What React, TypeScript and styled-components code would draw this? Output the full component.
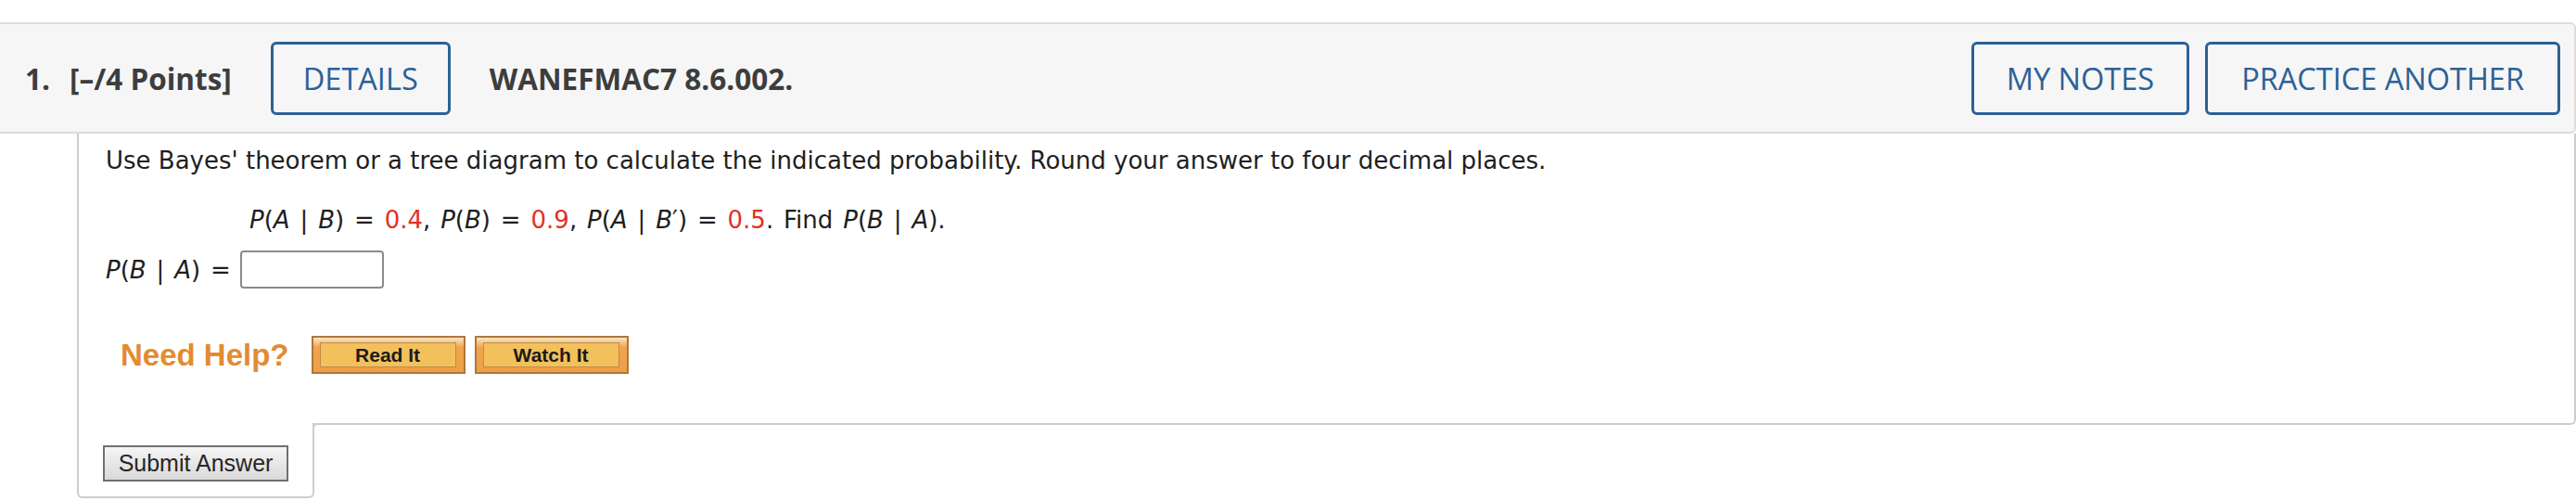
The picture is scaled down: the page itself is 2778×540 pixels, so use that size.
import React from "react";
import styled, { createGlobalStyle } from "styled-components";

const Global = createGlobalStyle`
  html, body { margin: 0; padding: 0; background: #ffffff; }
  body { font-family: "DejaVu Sans", Verdana, sans-serif; overflow: hidden; }
`;

const Page = styled.div`
  width: 2778px;
  padding-top: 24px;
  box-sizing: border-box;
`;

const Header = styled.div`
  display: flex;
  align-items: center;
  width: 2778px;
  height: 120px;
  box-sizing: border-box;
  background: #f6f6f6;
  border: 2px solid #dcdcdc;
  border-left: none;
  border-radius: 0 6px 6px 0;
  padding: 0 15px 0 27px;
  font-family: "Open Sans", sans-serif;
  color: #3d3d3d;
`;

const Num = styled.span`
  font-weight: 700;
  font-size: 31.5px;
  margin-right: 21px;
`;

const Points = styled.span`
  font-weight: 700;
  font-size: 31.5px;
  margin-right: 42px;
`;

const Code = styled.span`
  font-weight: 700;
  font-size: 31.5px;
  margin-left: 42px;
`;

const OutlineButton = styled.button<{ $pad?: number }>`
  height: 79px;
  padding: 0 ${(p) => p.$pad ?? 35}px;
  border: 3px solid #2b6197;
  border-radius: 6px;
  background: transparent;
  color: #2b6197;
  font-family: "Open Sans", sans-serif;
  font-size: 32.5px;
  font-weight: 400;
  cursor: pointer;
`;

const RightGroup = styled.div`
  margin-left: auto;
  display: flex;
  gap: 17px;
`;

const Panel = styled.div`
  margin-left: 83px;
  border-left: 2px solid #cdcdcd;
  border-right: 2px solid #cdcdcd;
  border-bottom: 2px solid #cdcdcd;
  border-bottom-right-radius: 6px;
  padding: 14px 0 53px 29px;
  color: #1e1e1e;
  font-family: "DejaVu Sans", Verdana, sans-serif;
  font-size: 26px;
  line-height: 30px;
`;

const Para = styled.div``;

const Equation = styled.div`
  margin: 34px 0 0 155px;
  word-spacing: 2.6px;
`;

const I = styled.i`
  font-style: italic;
`;

const Red = styled.span`
  color: #e3301f;
`;

const AnswerRow = styled.div`
  display: flex;
  align-items: center;
  margin-top: 18px;
  gap: 10px;
  word-spacing: 2.6px;
`;

const AnswerInput = styled.input`
  width: 155px;
  height: 41px;
  box-sizing: border-box;
  border: 2px solid #8a8a8a;
  border-radius: 4px;
  background: #fff;
`;

const HelpRow = styled.div`
  display: flex;
  align-items: center;
  margin: 51px 0 0 16px;
`;

const HelpLabel = styled.span`
  font-family: "Liberation Sans", Arial, sans-serif;
  font-weight: 700;
  font-size: 33px;
  color: #e38b31;
  margin-right: 24px;
`;

const HelpButton = styled.button`
  width: 166px;
  height: 41px;
  box-sizing: border-box;
  margin-right: 10px;
  padding: 5px 8px 5px 7px;
  border: 2px solid #b0773a;
  background: linear-gradient(#fbe6c6 0%, #f0a54f 28%, #ee9f46 100%);
  display: flex;
  cursor: pointer;
`;

const HelpInner = styled.span`
  flex: 1;
  display: flex;
  align-items: center;
  justify-content: center;
  border: 1px solid #bf8b48;
  background: #f3c15c;
  font-family: "Liberation Sans", Arial, sans-serif;
  font-weight: 700;
  font-size: 21px;
  color: #1b1b1b;
`;

const SubmitTab = styled.div`
  position: relative;
  margin: -2px 0 0 83px;
  width: 256px;
  box-sizing: border-box;
  background: #fff;
  border: 2px solid #cdcdcd;
  border-top: none;
  border-radius: 0 0 6px 6px;
  padding: 24px 0 16px 26px;
  &::after {
    content: "";
    position: absolute;
    right: -8px;
    top: 0;
    width: 6px;
    height: 6px;
    border-top: 2px solid #cdcdcd;
    border-left: 2px solid #cdcdcd;
    border-top-left-radius: 6px;
    background: #fff;
  }
`;

const SubmitButton = styled.button`
  width: 200px;
  height: 39px;
  box-sizing: border-box;
  border: 2px solid #707070;
  background: linear-gradient(#f5f5f5, #d9d9d9);
  font-family: "Liberation Sans", Arial, sans-serif;
  font-size: 25px;
  color: #262626;
  padding: 0;
  cursor: pointer;
`;

export default function App() {
  return (
    <Page>
      <Global />
      <Header>
        <Num>1.</Num>
        <Points>[–/4 Points]</Points>
        <OutlineButton $pad={32}>DETAILS</OutlineButton>
        <Code>WANEFMAC7 8.6.002.</Code>
        <RightGroup>
          <OutlineButton>MY NOTES</OutlineButton>
          <OutlineButton $pad={36}>PRACTICE ANOTHER</OutlineButton>
        </RightGroup>
      </Header>
      <Panel>
        <Para>
          Use Bayes' theorem or a tree diagram to calculate the indicated probability. Round your answer to four decimal places.
        </Para>
        <Equation>
          <I>P</I>(<I>A</I> | <I>B</I>) = <Red>0.4</Red>, <I>P</I>(<I>B</I>) = <Red>0.9</Red>, <I>P</I>(<I>A</I> | <I>B</I>′) = <Red>0.5</Red>. Find <I>P</I>(<I>B</I> | <I>A</I>).
        </Equation>
        <AnswerRow>
          <span>
            <I>P</I>(<I>B</I> | <I>A</I>) =
          </span>
          <AnswerInput type="text" />
        </AnswerRow>
        <HelpRow>
          <HelpLabel>Need Help?</HelpLabel>
          <HelpButton>
            <HelpInner>Read It</HelpInner>
          </HelpButton>
          <HelpButton>
            <HelpInner>Watch It</HelpInner>
          </HelpButton>
        </HelpRow>
      </Panel>
      <SubmitTab>
        <SubmitButton>Submit Answer</SubmitButton>
      </SubmitTab>
    </Page>
  );
}
